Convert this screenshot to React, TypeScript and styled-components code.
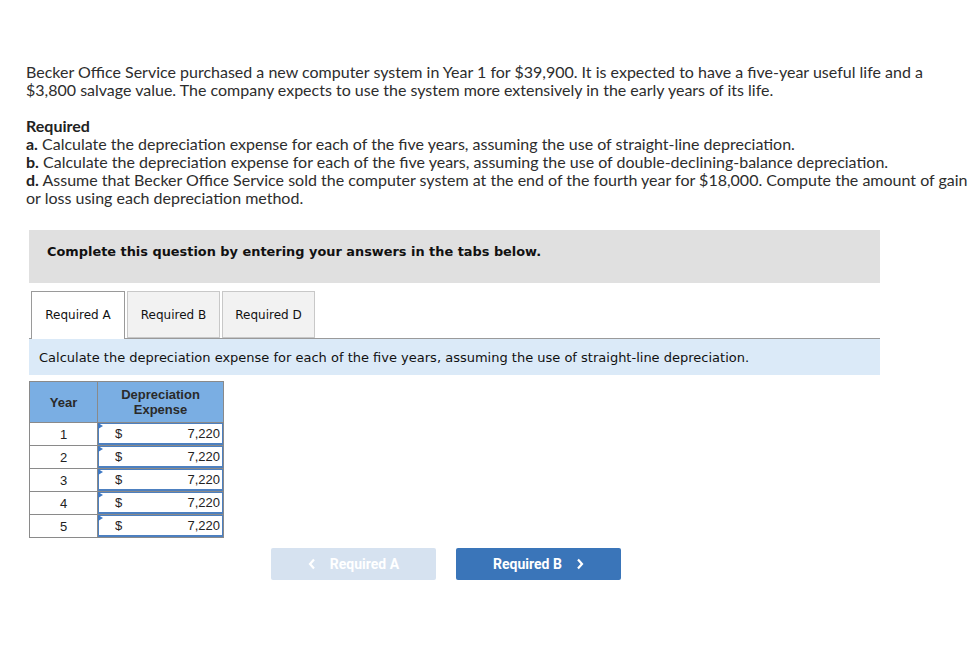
import React from "react";
import styled, { createGlobalStyle } from "styled-components";

const GlobalStyle = createGlobalStyle`
  html, body { margin: 0; padding: 0; background: #fff; }
  * { box-sizing: border-box; }
`;

const Page = styled.div`
  padding: 63px 0 0 26px;
  width: 979px;
`;

const Question = styled.div`
  font-family: Lato, "Open Sans", sans-serif;
  font-size: 16px;
  line-height: 18px;
  color: #2d2d2d;
  width: 942px;
`;

const Para = styled.p`
  margin: 0 0 18px 0;
`;

const ReqTitle = styled.div`
  font-weight: 700;
  color: #222;
`;

const ReqLine = styled.div``;

const Tag = styled.b`
  font-weight: 700;
  color: #222;
`;

const Workspace = styled.div`
  margin: 23px 0 0 3px;
  width: 851px;
  font-family: Verdana, "DejaVu Sans", sans-serif;
`;

const Banner = styled.div`
  background: #e0e0e0;
  height: 53px;
  padding: 14px 18px 0;
  font-weight: 700;
  font-size: 12.9px;
  line-height: 16px;
  color: #111;
`;

const TabRow = styled.div`
  margin-top: 8px;
  display: flex;
  gap: 2px;
  padding-left: 2px;
  border-bottom: 1px solid #9a9a9a;
  height: 48px;
`;

const Tab = styled.div<{ $active?: boolean }>`
  width: ${(p) => (p.$active ? 94 : 93)}px;
  height: ${(p) => (p.$active ? 48 : 47)}px;
  display: flex;
  align-items: center;
  justify-content: center;
  font-size: 12px;
  color: #111;
  background: ${(p) => (p.$active ? "#fff" : "#f2f2f2")};
  border: 1px solid ${(p) => (p.$active ? "#9a9a9a" : "#c8c8c8")};
  border-bottom: ${(p) => (p.$active ? "none" : "1px solid #c8c8c8")};
  padding-bottom: ${(p) => (p.$active ? 1 : 0)}px;
`;

const Instruction = styled.div`
  background: #dbeaf8;
  height: 36px;
  padding: 0 10px;
  display: flex;
  align-items: center;
  font-size: 13px;
  color: #111;
`;

const Table = styled.table`
  margin-top: 6px;
  border-collapse: collapse;
  font-family: "Liberation Sans", Arial, sans-serif;
  font-size: 13px;
  color: #222;
`;

const HeadCell = styled.th<{ $w: number }>`
  width: ${(p) => p.$w}px;
  height: 41px;
  background: #7aaee3;
  border: 1px solid #8a8a8a;
  font-weight: 700;
  line-height: 15px;
  color: #2a2a2a;
  padding: 0;
`;

const YearCell = styled.td`
  height: 23px;
  border: 1px solid #8a8a8a;
  text-align: center;
  padding: 0;
`;

const ValueCell = styled.td`
  height: 23px;
  border: 1px solid #8a8a8a;
  padding: 0;
`;

const InputBox = styled.div`
  position: relative;
  height: 22px;
  border: 1px solid #4d80c0;
  border-bottom: 2px solid #4d80c0;
  display: flex;
  align-items: center;
  justify-content: space-between;
  padding: 0 2px 0 16px;
  background: #fff;
`;

const Corner = styled.span`
  position: absolute;
  left: -1px;
  top: -1px;
  width: 0;
  height: 0;
  border-left: 5px solid #3d78c4;
  border-top: 3px solid transparent;
  border-bottom: 3px solid transparent;
`;

const Nav = styled.div`
  margin-top: 10px;
  padding-left: 242px;
  display: flex;
  gap: 20px;
`;

const NavButton = styled.div<{ $disabled?: boolean }>`
  width: 165px;
  height: 32px;
  border-radius: 2px;
  background: ${(p) => (p.$disabled ? "#d6e2f0" : "#3a75b9")};
  color: #fff;
  font-family: Roboto, "Liberation Sans", Arial, sans-serif;
  font-weight: 700;
  font-size: 14px;
  display: flex;
  align-items: center;
  justify-content: center;
  gap: 14px;
`;

const Chevron = ({ dir }: { dir: "left" | "right" }) => (
  <svg width="8" height="12" viewBox="0 0 8 12">
    <path
      d={dir === "left" ? "M6 1.5 L2 6 L6 10.5" : "M2 1.5 L6 6 L2 10.5"}
      fill="none"
      stroke="#fff"
      strokeWidth="2.2"
    />
  </svg>
);

export default function App() {
  const rows = [1, 2, 3, 4, 5];
  return (
    <>
      <GlobalStyle />
      <Page>
        <Question>
          <Para>
            Becker Office Service purchased a new computer system in Year 1 for $39,900. It is expected to have a five-year useful life and a
            $3,800 salvage value. The company expects to use the system more extensively in the early years of its life.
          </Para>
          <ReqTitle>Required</ReqTitle>
          <ReqLine>
            <Tag>a.</Tag> Calculate the depreciation expense for each of the five years, assuming the use of straight-line depreciation.
          </ReqLine>
          <ReqLine>
            <Tag>b.</Tag> Calculate the depreciation expense for each of the five years, assuming the use of double-declining-balance depreciation.
          </ReqLine>
          <ReqLine>
            <Tag>d.</Tag> Assume that Becker Office Service sold the computer system at the end of the fourth year for $18,000. Compute the amount of gain
            or loss using each depreciation method.
          </ReqLine>
        </Question>
        <Workspace>
          <Banner>Complete this question by entering your answers in the tabs below.</Banner>
          <TabRow>
            <Tab $active>Required A</Tab>
            <Tab>Required B</Tab>
            <Tab>Required D</Tab>
          </TabRow>
          <Instruction>
            Calculate the depreciation expense for each of the five years, assuming the use of straight-line depreciation.
          </Instruction>
          <Table>
            <thead>
              <tr>
                <HeadCell $w={68}>Year</HeadCell>
                <HeadCell $w={126}>
                  Depreciation
                  <br />
                  Expense
                </HeadCell>
              </tr>
            </thead>
            <tbody>
              {rows.map((r) => (
                <tr key={r}>
                  <YearCell>{r}</YearCell>
                  <ValueCell>
                    <InputBox>
                      <Corner />
                      <span>$</span>
                      <span>7,220</span>
                    </InputBox>
                  </ValueCell>
                </tr>
              ))}
            </tbody>
          </Table>
          <Nav>
            <NavButton $disabled>
              <Chevron dir="left" />
              Required A
            </NavButton>
            <NavButton>
              Required B
              <Chevron dir="right" />
            </NavButton>
          </Nav>
        </Workspace>
      </Page>
    </>
  );
}
